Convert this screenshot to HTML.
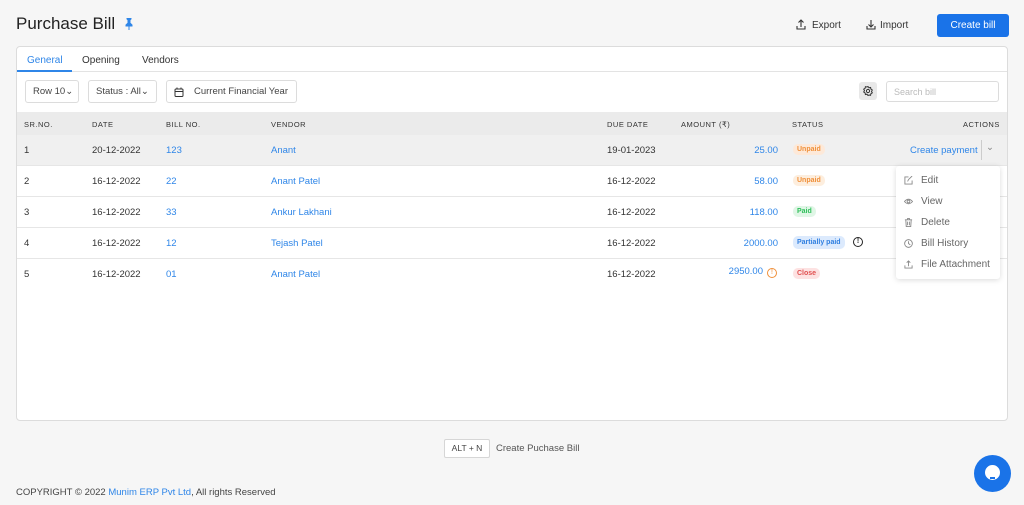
<!DOCTYPE html>
<html><head><meta charset="utf-8"><style>
*{box-sizing:border-box;margin:0;padding:0}
body{width:1024px;height:505px;background:#f6f6f6;font-family:"Liberation Sans",sans-serif;color:#333;position:relative;overflow:hidden;font-size:9px}
.a{position:absolute;white-space:nowrap}
.blue{color:#2f86e8}
.card{left:16px;top:46px;width:992px;height:375px;background:#fff;border:1px solid #dcdcdc;border-radius:4px}
.btn{border:1px solid #dcdcdc;border-radius:3px;background:#fff;height:23px;display:flex;align-items:center;padding:0 7px;font-size:9.5px;color:#444;white-space:nowrap}
.th{font-size:7.5px;letter-spacing:.5px;color:#333;top:120px}
.row{left:17px;width:990px;border-bottom:1px solid #e6e6e6;height:31px}
.c{position:absolute;font-size:9.5px;white-space:nowrap}
.badge{position:absolute;font-size:7px;font-weight:bold;border-radius:5px;padding:2px 4px}
.mi{position:absolute;left:25px;font-size:10px;color:#666}
.ic{position:absolute;left:8px;width:9px;height:9px}
</style></head><body>
<div class="a" style="left:16px;top:14px;font-size:17px;color:#222">Purchase Bill</div>
<svg class="a" style="left:124px;top:18px" width="10" height="12" viewBox="0 0 10 12"><path d="M3 0h4v1l-1 1v3l2 2v1H2V7l2-2V2L3 1z M5 8v4" fill="#2f86e8" stroke="#2f86e8" stroke-width="1"/></svg>
<svg class="a" style="left:796px;top:19px" width="10" height="11" viewBox="0 0 10 11" fill="none" stroke="#333" stroke-width="1.1"><path d="M5 8V1M2.5 3.5L5 1l2.5 2.5M1 7v3h8V7"/></svg>
<div class="a" style="left:812px;top:20px;font-size:10px">Export</div>
<svg class="a" style="left:866px;top:19px" width="10" height="11" viewBox="0 0 10 11" fill="none" stroke="#333" stroke-width="1.1"><path d="M5 1v7M2.5 5.5L5 8l2.5-2.5M1 7v3h8V7"/></svg>
<div class="a" style="left:880px;top:20px;font-size:10px">Import</div>
<div class="a" style="left:937px;top:14px;width:72px;height:23px;background:#1a73e8;border-radius:3px;color:#fff;font-size:10px;display:flex;align-items:center;justify-content:center">Create bill</div>
<div class="a card"></div>
<div class="a" style="left:17px;top:71px;width:990px;height:1px;background:#e3e3e3"></div>
<div class="a blue" style="left:27px;top:55px;font-size:10px">General</div>
<div class="a" style="left:17px;top:70px;width:55px;height:2px;background:#2f86e8"></div>
<div class="a" style="left:82px;top:55px;font-size:10px">Opening</div>
<div class="a" style="left:142px;top:55px;font-size:10px">Vendors</div>
<div class="a btn" style="left:25px;top:80px;width:54px">Row 10⌄</div>
<div class="a btn" style="left:88px;top:80px;width:69px">Status : All⌄</div>
<div class="a btn" style="left:166px;top:80px;width:131px"><svg width="10" height="10" viewBox="0 0 10 10" fill="none" stroke="#333" stroke-width="1"><rect x="1" y="2" width="8" height="7.5" rx="1"/><path d="M1 4.5h8M3 .5v2M7 .5v2"/></svg><span style="margin-left:10px">Current Financial Year</span></div>
<div class="a" style="left:859px;top:82px;width:18px;height:18px;background:#e8e8e8;border-radius:3px"><svg style="position:absolute;left:4px;top:4px" width="10" height="10" viewBox="0 0 10 10" fill="none" stroke="#333" stroke-width="1"><circle cx="5" cy="5" r="1.6"/><path d="M5 .5l1 1.3 1.6-.3.3 1.6 1.4.9-.8 1.4.8 1.4-1.4.9-.3 1.6-1.6-.3L5 9.5 4 8.2l-1.6.3-.3-1.6L.7 6 1.5 4.6.7 3.2l1.4-.9.3-1.6 1.6.3z"/></svg></div>
<div class="a btn" style="left:886px;top:81px;width:113px;height:21px;color:#bbb;font-size:9px">Search bill</div>
<div class="a" style="left:17px;top:112px;width:990px;height:23px;background:#ebebeb"></div>
<div class="a th" style="left:24px">SR.NO.</div><div class="a th" style="left:92px">DATE</div><div class="a th" style="left:166px">BILL NO.</div><div class="a th" style="left:271px">VENDOR</div><div class="a th" style="left:607px">DUE DATE</div><div class="a th" style="left:681px">AMOUNT (₹)</div><div class="a th" style="left:792px">STATUS</div><div class="a th" style="left:963px">ACTIONS</div>

<div class="a row" style="top:135px;background:#f0f0f0"><span class="c" style="left:7px;top:10px">1</span><span class="c" style="left:75px;top:10px">20-12-2022</span><span class="c blue" style="left:149px;top:10px">123</span><span class="c blue" style="left:254px;top:10px">Anant</span><span class="c" style="left:590px;top:10px">19-01-2023</span><span class="c blue" style="right:229px;top:10px">25.00</span><span class="badge" style="left:776px;top:9px;background:#fde9d9;color:#f0903a">Unpaid</span><span class="c blue" style="left:893px;top:10px">Create payment</span><span class="a" style="left:964px;top:5px;width:1px;height:20px;background:#ccc"></span><span class="c" style="left:969px;top:7px;color:#888">⌄</span></div>
<div class="a row" style="top:166px"><span class="c" style="left:7px;top:10px">2</span><span class="c" style="left:75px;top:10px">16-12-2022</span><span class="c blue" style="left:149px;top:10px">22</span><span class="c blue" style="left:254px;top:10px">Anant Patel</span><span class="c" style="left:590px;top:10px">16-12-2022</span><span class="c blue" style="right:229px;top:10px">58.00</span><span class="badge" style="left:776px;top:9px;background:#fdeede;color:#f0903a">Unpaid</span></div>
<div class="a row" style="top:197px"><span class="c" style="left:7px;top:10px">3</span><span class="c" style="left:75px;top:10px">16-12-2022</span><span class="c blue" style="left:149px;top:10px">33</span><span class="c blue" style="left:254px;top:10px">Ankur Lakhani</span><span class="c" style="left:590px;top:10px">16-12-2022</span><span class="c blue" style="right:229px;top:10px">118.00</span><span class="badge" style="left:776px;top:9px;background:#e0f6e6;color:#2fbf5a">Paid</span></div>
<div class="a row" style="top:228px"><span class="c" style="left:7px;top:10px">4</span><span class="c" style="left:75px;top:10px">16-12-2022</span><span class="c blue" style="left:149px;top:10px">12</span><span class="c blue" style="left:254px;top:10px">Tejash Patel</span><span class="c" style="left:590px;top:10px">16-12-2022</span><span class="c blue" style="right:229px;top:10px">2000.00</span><span class="badge" style="left:776px;top:8px;background:#dceafd;color:#2f7fe0;padding:3px 4px">Partially paid</span><span class="a" style="left:836px;top:9px;width:10px;height:10px;border:1.2px solid #222;border-radius:50%;font-size:7px;text-align:center;line-height:8px;font-weight:bold">!</span></div>
<div class="a row" style="top:259px;border-bottom:none"><span class="c" style="left:7px;top:10px">5</span><span class="c" style="left:75px;top:10px">16-12-2022</span><span class="c blue" style="left:149px;top:10px">01</span><span class="c blue" style="left:254px;top:10px">Anant Patel</span><span class="c" style="left:590px;top:10px">16-12-2022</span><span class="c blue" style="right:244px;top:7px">2950.00</span><span class="a" style="left:750px;top:9px;width:10px;height:10px;border:1.2px solid #f0903a;color:#f0903a;border-radius:50%;font-size:7px;text-align:center;line-height:8px">!</span><span class="badge" style="left:776px;top:9px;background:#fde2e2;color:#e05050">Close</span></div>

<div class="a" style="left:896px;top:166px;width:104px;height:113px;background:#fff;border-radius:3px;box-shadow:0 1px 6px rgba(0,0,0,.15)">
<svg class="ic" style="top:10px" viewBox="0 0 10 10" fill="none" stroke="#888" stroke-width="1"><path d="M5 1H1v8h8V5M4 6l1-2 4-4"/></svg><div class="mi" style="top:9px">Edit</div>
<svg class="ic" style="top:31px" viewBox="0 0 10 10" fill="none" stroke="#888" stroke-width="1"><path d="M.5 5Q5 0 9.5 5Q5 10 .5 5z"/><circle cx="5" cy="5" r="1.5"/></svg><div class="mi" style="top:30px">View</div>
<svg class="ic" style="top:52px" viewBox="0 0 10 10" fill="none" stroke="#888" stroke-width="1"><path d="M1 2h8M4 2V.5h2V2M2 2l.5 7.5h5L8 2M4 4v4M6 4v4"/></svg><div class="mi" style="top:51px">Delete</div>
<svg class="ic" style="top:73px" viewBox="0 0 10 10" fill="none" stroke="#888" stroke-width="1"><circle cx="5" cy="5" r="4.3"/><path d="M5 2.5V5l2 1.5"/></svg><div class="mi" style="top:72px">Bill History</div>
<svg class="ic" style="top:94px" viewBox="0 0 10 10" fill="none" stroke="#888" stroke-width="1"><path d="M5 7V1M3 3l2-2 2 2M1 6v3h8V6"/></svg><div class="mi" style="top:93px">File Attachment</div>
</div>

<div class="a" style="left:444px;top:439px;width:46px;height:19px;background:#fff;border:1px solid #d6d6d6;border-radius:2px;font-size:8.5px;text-align:center;line-height:17px;color:#444">ALT + N</div>
<div class="a" style="left:496px;top:443px;font-size:9.5px;color:#555">Create Puchase Bill</div>
<div class="a" style="left:16px;top:487px;font-size:9.5px;color:#444">COPYRIGHT © 2022 <span class="blue">Munim ERP Pvt Ltd</span>, All rights Reserved</div>
<div class="a" style="left:974px;top:455px;width:37px;height:37px;border-radius:50%;background:#1a73e8"><div style="position:absolute;left:11px;top:10px;width:15px;height:15px;border-radius:50%;background:#fff"></div><div style="position:absolute;left:16px;top:22px;width:5px;height:2px;background:#1a73e8"></div></div>
</body></html>
